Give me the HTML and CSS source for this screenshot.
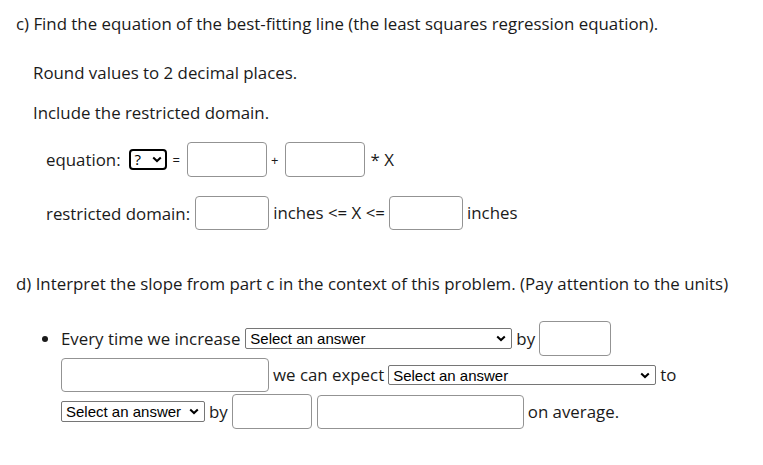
FILE: index.html
```html
<!DOCTYPE html>
<html>
<head>
<meta charset="utf-8">
<link rel="stylesheet" href="styles.css">
</head>
<body>
<div class="page">
  <p class="q title">c) Find the equation of the best-fitting line (the least squares regression equation).</p>
  <div class="indent">
    <p class="q round">Round values to 2 decimal places.</p>
    <p class="q include">Include the restricted domain.</p>
    <div class="row eqrow">
      <span class="lbl">equation:</span>
      <span class="qsel">?<svg class="chev" width="10" height="7" viewBox="0 0 10 7"><path d="M1.2 1.5l3.8 3.6 3.8-3.6" fill="none" stroke="#000" stroke-width="2"/></svg></span>
      <span class="sm eq">=</span>
      <span class="inp w80"></span>
      <span class="sm plus">+</span>
      <span class="inp w80"></span>
      <span class="times">* X</span>
    </div>
    <div class="row domrow">
      <span class="lbl">restricted domain:</span>
      <span class="inp w74 h34"></span>
      <span class="txt">inches &lt;= X &lt;=</span>
      <span class="inp w74 h34"></span>
      <span class="txt">inches</span>
    </div>
  </div>
  <p class="q dtitle">d) Interpret the slope from part c in the context of this problem. (Pay attention to the units)</p>
  <ul class="list">
    <li class="item">
      <div class="row r1">
        <span class="lead">Every time we increase</span>
        <span class="sel s267"><span>Select an answer</span><svg class="chev" width="10" height="7" viewBox="0 0 10 7"><path d="M1.2 1.5l3.8 3.6 3.8-3.6" fill="none" stroke="#000" stroke-width="2"/></svg></span>
        <span class="txt">by</span>
        <span class="inp w72"></span>
      </div>
      <div class="row r2">
        <span class="inp w208 h34 first"></span>
        <span class="txt">we can expect</span>
        <span class="sel s268"><span>Select an answer</span><svg class="chev" width="10" height="7" viewBox="0 0 10 7"><path d="M1.2 1.5l3.8 3.6 3.8-3.6" fill="none" stroke="#000" stroke-width="2"/></svg></span>
        <span class="txt">to</span>
      </div>
      <div class="row r3">
        <span class="sel s144 first"><span>Select an answer</span><svg class="chev" width="10" height="7" viewBox="0 0 10 7"><path d="M1.2 1.5l3.8 3.6 3.8-3.6" fill="none" stroke="#000" stroke-width="2"/></svg></span>
        <span class="txt">by</span>
        <span class="inp w80"></span>
        <span class="inp w207 h34 tight"></span>
        <span class="txt">on average.</span>
      </div>
    </li>
  </ul>
</div>
</body>
</html>
```
FILE: styles.css
```css
html, body {
  margin: 0;
  padding: 0;
  background: #fff;
}
body {
  font-family: "Open Sans", "Noto Sans", sans-serif;
  font-size: 16.85px;
  color: #1a1a1a;
  width: 763px;
  height: 465px;
  overflow: hidden;
}
.page {
  padding-left: 16px;
  padding-top: 13px;
}
.q {
  margin: 0;
  line-height: 22px;
  white-space: nowrap;
}
.indent {
  padding-left: 17px;
}
.round { margin-top: 27px; }
.include { margin-top: 18px; }
.row {
  display: flex;
  align-items: center;
  white-space: nowrap;
}
.eqrow {
  margin-top: 18px;
  padding-left: 13px;
  height: 35px;
}
.domrow {
  margin-top: 19px;
  padding-left: 13px;
  height: 34px;
}
.lbl { margin-right: 1px; }
.eqrow .lbl { margin-right: 8px; }
.inp {
  box-sizing: border-box;
  display: inline-block;
  height: 35px;
  border: 1px solid #939393;
  border-radius: 4px;
  background: #fff;
  margin: 0 4px;
}
.w80 { width: 80px; }
.w74 { width: 74px; }
.w72 { width: 72px; }
.w208 { width: 208px; }
.w207 { width: 207px; }
.h34 { height: 34px; }
.txt { line-height: 22px; }
.qsel {
  box-sizing: border-box;
  display: inline-flex;
  align-items: center;
  justify-content: space-between;
  width: 38px;
  height: 21px;
  border: 2px solid #000;
  border-radius: 4px;
  padding: 0 3px 0 4px;
  font-size: 15px;
  line-height: 17px;
  color: #000;
}
.sm {
  font-size: 13px;
}
.eq { margin: 0 3px 0 6px; }
.plus { margin: 0 3px 0 0; }
.times { margin-left: 1px; }
.sel {
  box-sizing: border-box;
  display: inline-flex;
  align-items: center;
  justify-content: space-between;
  height: 21px;
  border: 1px solid #767676;
  border-radius: 2px;
  background: #fff;
  padding: 0 5px 0 4px;
  font-family: "Liberation Sans", Arial, sans-serif;
  font-size: 15px;
  color: #000;
  margin: 0 4px;
}
.s267 { width: 267px; }
.s268 { width: 268px; height: 20px; }
.s144 { width: 144px; }
.first { margin-left: 0; }
.tight { margin-left: 1px; }
.chev { display: block; }
.dtitle { margin-top: 43px; }
.list {
  margin: 26px 0 0 0;
  padding-left: 45px;
  list-style: disc;
}
.item { padding-left: 0; }
.r1 { height: 35px; }
.r1 .lead { margin-right: 1px; }
.r2 { margin-top: 2px; height: 34px; }
.r3 { margin-top: 2px; height: 35px; }
```
